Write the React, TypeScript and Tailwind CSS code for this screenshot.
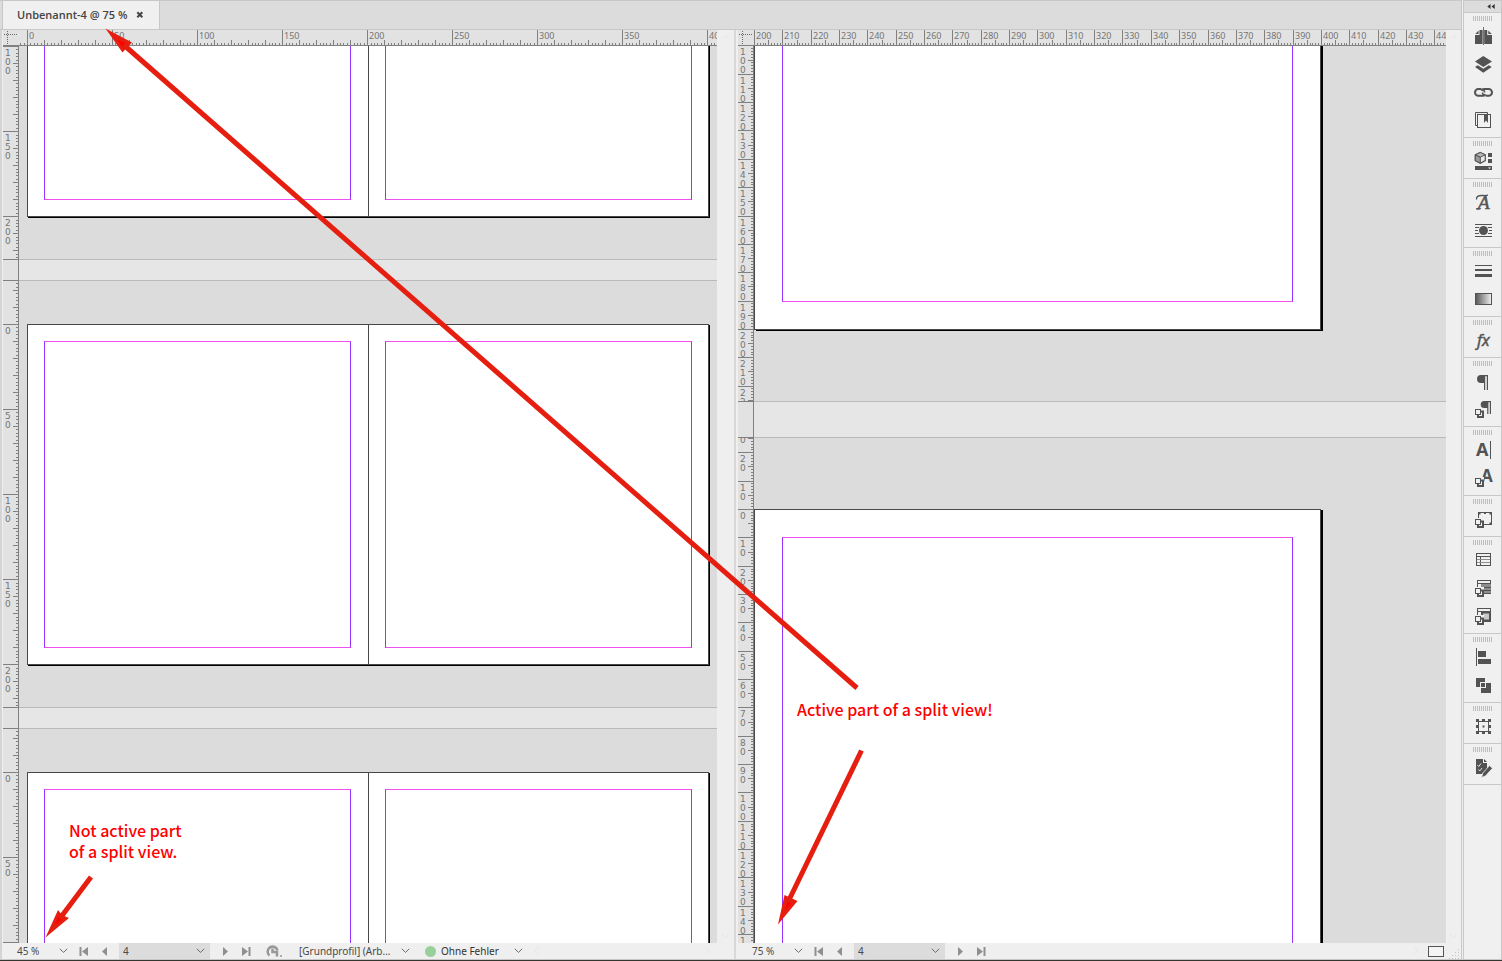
import type { ReactNode } from "react";

const RULER_LINE = "#808080";
const INK = "#535353";

interface Scale {
  px: number; // pixels per millimetre
  minor: number;
  mid: number;
  major: number;
}

interface Section {
  height?: number; // last one fills what is left
  top: number; // y of the spread inside the section
}

interface PaneData {
  scale: Scale;
  start: number; // millimetre value at the spread's left edge
  spreadX: number;
  units: [number, number];
  gap: string;
  sections: Section[];
}

const leftPane: PaneData = {
  scale: { px: 1.7008, minor: 2, mid: 10, major: 50 },
  start: 0,
  spreadX: 8,
  units: [-4, 400],
  gap: "h-[22px]",
  sections: [{ height: 213, top: -170 }, { height: 426, top: 43 }, { top: 43 }],
};

const rightPane: PaneData = {
  scale: { px: 2.8346, minor: 1, mid: 5, major: 10 },
  start: 200,
  spreadX: 0,
  units: [200, 443],
  gap: "h-[37px]",
  sections: [{ height: 355, top: -284 }, { top: 71 }],
};

function ticks(from: number, to: number, step: number) {
  const out: number[] = [];
  for (let v = Math.ceil(from / step) * step; v <= to; v += step) out.push(v);
  return out;
}

function HorizontalRuler({ data }: { data: PaneData }) {
  const { scale, start, spreadX, units } = data;
  return (
    <svg className="h-4 w-0 flex-1 border-b border-[#808080] bg-[#e2e2e2]" shapeRendering="crispEdges">
      {ticks(units[0], units[1] + 20, scale.minor).map((v) => {
        const x = Math.round(spreadX + (v - start) * scale.px);
        const len = v % scale.major === 0 ? 16 : v % scale.mid === 0 ? 5 : 2;
        return <rect key={v} x={x} y={15 - len} width={1} height={len} fill={RULER_LINE} />;
      })}
      {ticks(units[0], units[1], scale.major).map((v) => (
        <text key={v} x={Math.round(spreadX + (v - start) * scale.px) + 2} y={9} fontSize={9} fill="#757575">
          {v}
        </text>
      ))}
    </svg>
  );
}

function VerticalRuler({ section, scale }: { section: Section; scale: Scale }) {
  const height = section.height ?? 640;
  const from = -section.top / scale.px;
  const to = (height - section.top) / scale.px;
  const y = (v: number) => Math.round(section.top + v * scale.px);
  const digits = ticks(from - scale.major, to, scale.major)
    .flatMap((v) => [...String(Math.abs(v))].map((digit, i) => ({ key: `${v}-${i}`, digit, base: y(v) + 10 + i * 9 })))
    .filter(({ base }) => base > 3 && base < height + 6);
  return (
    <svg
      className={section.height ? "block w-4 shrink-0 border-r border-[#808080]" : "block h-0 w-4 flex-1 border-r border-[#808080]"}
      style={section.height ? { height: section.height } : undefined}
      shapeRendering="crispEdges"
      fontFamily="DejaVu Sans, sans-serif"
    >
      {ticks(from, to, scale.minor).map((v) => {
        const len = v % scale.major === 0 ? 15 : v % scale.mid === 0 ? 5 : 2;
        return <rect key={v} x={15 - len} y={y(v)} width={len} height={1} fill={RULER_LINE} />;
      })}
      {digits.map(({ key, digit, base }) => (
        <text key={key} x={2} y={base} fontSize={9} fill="#757575">
          {digit}
        </text>
      ))}
    </svg>
  );
}

function Margins() {
  return <div className="h-full border border-x-[#9933ff] border-y-[#f050f0]" />;
}

function Spread({ top, single }: { top: number; single?: boolean }) {
  if (single) {
    return (
      <div className="absolute left-0 h-[568px] w-[567px] border border-[#484848] bg-white p-[27px] shadow-[2px_1px_0_#000]" style={{ top }}>
        <Margins />
      </div>
    );
  }
  return (
    <div className="absolute left-2 flex h-[341px] w-[682px] border border-[#484848] bg-white shadow-[1px_1px_0_#000]" style={{ top }}>
      <div className="w-[341px] border-r border-[#484848] py-4 pr-[17px] pl-4">
        <Margins />
      </div>
      <div className="flex-1 p-4">
        <Margins />
      </div>
    </div>
  );
}

function Chevron({ className = "", color = "#6b6b6b" }: { className?: string; color?: string }) {
  return (
    <svg width="9" height="6" viewBox="0 0 9 6" className={className} fill="none" stroke={color}>
      <path d="M.8 .8L4.5 4.4L8.2 .8" />
    </svg>
  );
}

function ScrollBar({ width }: { width: string }) {
  return (
    <div className={`flex shrink-0 flex-col items-center justify-between bg-[#efefef] py-1 ${width}`}>
      <Chevron className="rotate-180" color="#e6e6e6" />
      <Chevron color="#e6e6e6" />
    </div>
  );
}

function Pane({ data, single, scrollWidth, children }: { data: PaneData; single?: boolean; scrollWidth: string; children: ReactNode }) {
  return (
    <section className="flex min-w-0 flex-col">
      <div className="flex min-h-0 flex-1">
        <div className="flex min-w-0 flex-1 flex-col">
          <div className="flex">
            <svg width="16" height="16" className="shrink-0 border-b border-[#808080] bg-[#e2e2e2]" shapeRendering="crispEdges">
              <path d="M4.5 1V15M1 4.5H15" stroke="#6b6b6b" strokeDasharray="1 1" />
            </svg>
            <HorizontalRuler data={data} />
          </div>
          <div className="flex min-h-0 flex-1">
            <div className="flex w-4 shrink-0 flex-col overflow-hidden bg-[#e2e2e2]">
              {data.sections.map((s, i) => (
                <div key={i} className={s.height ? "contents" : "flex min-h-0 flex-1 flex-col"}>
                  {i > 0 && <div className={`shrink-0 border-y border-r border-[#808080] ${data.gap}`} />}
                  <VerticalRuler section={s} scale={data.scale} />
                </div>
              ))}
            </div>
            <div className="flex min-w-0 flex-1 flex-col overflow-hidden bg-[#dcdcdc]">
              {data.sections.map((s, i) => (
                <div key={i} className={s.height ? "contents" : "flex min-h-0 flex-1 flex-col"}>
                  {i > 0 && <div className={`shrink-0 border-y border-[#bababa] bg-[#e6e6e6] ${data.gap}`} />}
                  <div
                    className={s.height ? "relative shrink-0 overflow-hidden" : "relative flex-1 overflow-hidden"}
                    style={s.height ? { height: s.height } : undefined}
                  >
                    <Spread top={s.top} single={single} />
                  </div>
                </div>
              ))}
            </div>
          </div>
        </div>
        <ScrollBar width={scrollWidth} />
      </div>
      <div className="flex h-4 shrink-0 items-center bg-[#efefef] pl-[14px] text-[10px] text-[#4a4a4a]">{children}</div>
    </section>
  );
}

function Dropdown({ label, value, className }: { label: string; value: string; className: string }) {
  return (
    <div className={`relative flex h-4 shrink-0 items-center ${className}`}>
      <select aria-label={label} className="h-4 w-full appearance-none bg-transparent pr-3 leading-4 outline-none">
        <option>{value}</option>
      </select>
      <Chevron className="pointer-events-none absolute right-[5px]" />
    </div>
  );
}

function StepButton({ label, d }: { label: string; d: string }) {
  return (
    <button aria-label={label} className="flex h-4 w-[21px] shrink-0 items-center justify-center">
      <svg width="10" height="10" viewBox="0 0 10 10" fill="#8f8f8f">
        <path d={d} />
      </svg>
    </button>
  );
}

function PageNavigation({ zoom }: { zoom: string }) {
  return (
    <>
      <Dropdown label="Zoom" value={zoom} className="w-14" />
      <StepButton label="Erste Seite" d="M.5 1h2v9h-2zM9 1v9L3 5.500z" />
      <StepButton label="Vorherige Seite" d="M7 1v9L2 5.500z" />
      <Dropdown label="Seite" value="4" className="ml-1 w-[91px] bg-[#dcdcdc] pl-1" />
      <span className="w-1" />
      <StepButton label="Nächste Seite" d="M3 1v9l5-4.500z" />
      <StepButton label="Letzte Seite" d="M7.500 1h2v9h-2zM1 1v9l6-4.500z" />
    </>
  );
}

// Small overlapping boxes that mark the "styles" panels
const styleBadge = (
  <g>
    <path d="M1 10h10v10H4v-3H1z" fill="#f0f0f0" />
    <path d="M7 13.5h3v5.5H5V16" fill="none" stroke={INK} strokeWidth="2" />
    <rect x="2.5" y="11.5" width="5" height="5" fill="#f0f0f0" stroke={INK} />
  </g>
);

const panelGroups: { name: string; art: ReactNode }[][] = [
  [
    {
      name: "Seiten",
      art: (
        <g>
          <path d="M6.5 5H9.6V19H2V10H6.5zM2.3 9L5.6 5.4V9zM11.200 5h3v5H19v9h-7.800zM15.3 5.4L18.7 9h-3.4z" />
          <path d="M10 2h.8v18H10z" />
        </g>
      ),
    },
    { name: "Ebenen", art: <path d="M10.3 3L19 8.500l-8.700 5.500L2 8.500zM2 14l2.800-1.800 5.500 3.600 5.500-3.600 2.900 1.800-8.400 5.700z" /> },
    {
      name: "Verknüpfungen",
      art: (
        <g fill="none" strokeWidth="2">
          <path d="M12.500 13.200A3.500 3.500 0 0 1 10 14.800H5.400a3.400 3.400 0 0 1 0-6.800H8.500" stroke={INK} />
          <path d="M8.500 9.700A3.500 3.500 0 0 1 11.500 8h4.100a3.400 3.400 0 0 1 0 6.800H12.800" stroke={INK} />
          <path d="M8.800 8.200c2 .4 2.800 1.500 2.800 3.300M12.200 14.600c-2-.4-2.700-1.500-2.700-3.200" stroke={INK} strokeWidth="1.500" />
        </g>
      ),
    },
    {
      name: "Lesezeichen",
      art: (
        <g>
          <path d="M4 16.500H2.500v-13h12V5" fill="none" stroke={INK} />
          <rect x="4.500" y="5.500" width="13" height="13" fill="none" stroke={INK} />
          <path d="M11 6h4v8l-2-2.500L11 14z" />
        </g>
      ),
    },
  ],
  [
    {
      name: "CC Libraries",
      art: (
        <g>
          <path d="M7.300 2.500l5 2.300v5.800l-5 2.600-5-2.600V4.800z" fill="#e8e8e8" stroke={INK} strokeWidth="1.200" />
          <path d="M2.300 4.800l5 2.300v6.100l-5-2.600z" fill="#9a9a9a" stroke={INK} />
          <path d="M2.300 4.800l5-2.300 5 2.300-5 2.300z" fill="#b8b8b8" stroke={INK} />
          <path d="M15 3h4v4h-4zM15 9h4v4h-4zM2 16h17v4H2z" />
          <path d="M15 17.500h3L16.500 19z" fill="#fff" />
        </g>
      ),
    },
  ],
  [
    {
      name: "Glyphen",
      art: (
        <g>
          <text x="5" y="18" fontSize="19" fontStyle="italic" fontFamily="Liberation Serif, serif" stroke={INK} strokeWidth=".5">A</text>
          <path d="M3.500 8.500C3 5.500 5.500 4.500 8.500 4.500s4.500.2 6.500-.3" fill="none" stroke={INK} strokeWidth="1.300" />
          <path d="M7.500 17.500c-2 1-3.500.8-4.200-.2" fill="none" stroke={INK} strokeWidth="1.300" />
        </g>
      ),
    },
    {
      name: "Textumfluss",
      art: (
        <g>
          <path d="M2 5h17v1H2zM2 8h4v1H2zM2 11h3v1H2zM2 14h4v1H2zM2 17h17v1H2zM15 8h4v1h-4zM16 11h3v1h-3zM15 14h4v1h-4z" />
          <circle cx="10.500" cy="11.500" r="4.500" />
        </g>
      ),
    },
  ],
  [
    { name: "Kontur", art: <path d="M2 5h17v1H2zM2 9h17v2H2zM2 14h17v3H2z" /> },
    {
      name: "Verlauf",
      art: (
        <g>
          <defs>
            <linearGradient id="swatch">
              <stop offset="0" stopColor="#555" />
              <stop offset="1" stopColor="#f0f0f0" />
            </linearGradient>
          </defs>
          <rect x="2.500" y="5.500" width="16" height="11" fill="url(#swatch)" stroke={INK} />
        </g>
      ),
    },
  ],
  [
    {
      name: "Effekte",
      art: (
        <text x="4" y="17" fontSize="16" fontStyle="italic" fontFamily="Open Sans, sans-serif" stroke={INK} strokeWidth=".5">
          fx
        </text>
      ),
    },
  ],
  [
    { name: "Absatz", art: <path d="M15 5v15h-1.200V6.200h-1.600V20H11v-7H8a4 4 0 0 1 0-8z" /> },
    {
      name: "Absatzformate",
      art: (
        <g>
          <path d="M18 3v13h-1.200V4.200h-1.400V16h-1.200v-6h-3a3.500 3.500 0 0 1 0-7z" />
          {styleBadge}
        </g>
      ),
    },
  ],
  [
    {
      name: "Zeichen",
      art: (
        <g>
          <text x="3" y="17" fontSize="18" fontWeight="700" fontFamily="Open Sans, sans-serif">A</text>
          <path d="M17 2h1v18h-1z" />
        </g>
      ),
    },
    {
      name: "Zeichenformate",
      art: (
        <g>
          <text x="8" y="15" fontSize="17" fontWeight="700" fontFamily="Open Sans, sans-serif">A</text>
          {styleBadge}
        </g>
      ),
    },
  ],
  [
    {
      name: "Objektformate",
      art: (
        <g>
          <rect x="5.500" y="4.500" width="13" height="12" fill="none" stroke={INK} />
          <path d="M5 4h2.500v2.500H5zM16.500 4H19v2.500h-2.500zM16.500 14.500H19V17h-2.500zM11 4h2v2h-2z" />
          {styleBadge}
        </g>
      ),
    },
  ],
  [
    {
      name: "Tabelle",
      art: (
        <g>
          <rect x="3.500" y="4.500" width="14" height="12" fill="none" stroke={INK} />
          <path d="M3 7h15v1H3zM7 8h1v9H7z" />
          <path d="M4 10h13v1H4zM4 13h13v1H4z" fill="#8e8e8e" />
        </g>
      ),
    },
    {
      name: "Tabellenformate",
      art: (
        <g>
          <rect x="4.500" y="3.500" width="13" height="3" fill="none" stroke={INK} />
          <path d="M8 7h10v3H8zM9 11h9v2H9zM11 14h7v2h-7z" fill="#8e8e8e" />
          <path d="M4 6h1v5H4zM8 10h10v1H8zM10 13h8v1h-8zM11 16h7v1h-7z" />
          {styleBadge}
        </g>
      ),
    },
    {
      name: "Zellenformate",
      art: (
        <g>
          <rect x="4.500" y="3.500" width="13" height="3" fill="none" stroke={INK} />
          <path d="M4 6h1v5H4zM8 6h10v11h-7v-6H8z" />
          <path d="M10 8.500h6v6h-5V11h-1z" fill="#c8c8c8" />
          {styleBadge}
        </g>
      ),
    },
  ],
  [
    { name: "Ausrichten", art: <path d="M3 2h1v18H3zM5 5h8v6H5zM5 13h13v5H5z" /> },
    {
      name: "Pathfinder",
      art: (
        <g>
          <path d="M3 4h9v4H7v5H3zM18 9v10H8v-5h5V9z" />
          <path d="M8 9h4v4H8z" />
        </g>
      ),
    },
  ],
  [
    {
      name: "Transformieren",
      art: (
        <g>
          <path d="M3 4h3v3H3zM9 4h3v3H9zM15 4h3v3h-3zM3 10h3v3H3zM15 10h3v3h-3zM3 16h3v3H3zM9 16h3v3H9zM15 16h3v3h-3z" />
          <rect x="5.500" y="6.500" width="10" height="10" fill="#f0f0f0" stroke={INK} />
          <path d="M9.500 10.500h2v2h-2z" />
        </g>
      ),
    },
  ],
  [
    {
      name: "Änderungen verfolgen",
      art: (
        <g>
          <path d="M3 3h7v4h4v7l-5 4H3z" />
          <path d="M11 3l3 3h-3z" />
          <path d="M4.500 9l1.200 1.500L8 7.500M5.500 13.500l1.200 1.500L9 12" fill="none" stroke="#e0e0e0" />
          <path d="M16.500 9.500l3 2.700-7 7.800-4 1.500 1.300-4.500z" stroke="#f0f0f0" strokeWidth=".8" />
        </g>
      ),
    },
  ],
];

function Dock() {
  return (
    <aside className="flex w-[39px] shrink-0 flex-col border-x border-[#c8c8c8] bg-[#f0f0f0]">
      <button aria-label="Bedienfelder erweitern" className="flex h-[13px] items-center justify-end border-y border-[#c8c8c8] bg-[#dcdcdc] pr-[6px]">
        <svg width="8" height="5" viewBox="0 0 8 5" fill="#333">
          <path d="M3.500 0v5L.3 2.500zM7.700 0v5L4.500 2.500z" />
        </svg>
      </button>
      {panelGroups.map((group, i) => (
        <div key={i} className="flex flex-col items-center border-b border-[#c8c8c8] pt-[3px] pb-1">
          <div className="h-[5px] w-[19px] bg-[repeating-linear-gradient(90deg,#bdbdbd_0_1px,transparent_1px_2px)]" />
          {group.map(({ name, art }) => (
            <button key={name} aria-label={name} className="flex size-7 items-center justify-center">
              <svg width="20" height="20" viewBox="0 0 20 20" fill={INK} className="shrink-0 overflow-visible">
                {art}
              </svg>
            </button>
          ))}
        </div>
      ))}
    </aside>
  );
}

function Annotations() {
  return (
    <>
      <svg className="pointer-events-none absolute inset-0 size-full" fill="#e61e10">
        <g stroke="#e61e10" strokeWidth="5">
          <path d="M857 688L125 46" />
          <path d="M861.500 750.500L789 900" />
          <path d="M91 877L61 917" />
        </g>
        <path d="M105.500 28.500L132 42.500L127 47.500L122.500 52.500z" />
        <path d="M778 924.500L784.500 895L791 898L797.500 901z" />
        <path d="M45.500 937.500L58 910L62 915L69 918z" />
        <g fill="#ff0000">
          <path d="M117 39.500l8 3.500-3 3.500z" />
          <path d="M784.500 911l3-9.500 4 2z" />
          <path d="M55 925l3-8 4 2.500z" />
        </g>
      </svg>
      <p className="absolute top-[699px] left-[797px] font-['Noto_Sans_CJK_SC',sans-serif] text-base leading-[21px] font-medium text-[#ff0000]">
        Active part of a split view!
      </p>
      <p className="absolute top-[820px] left-[69px] font-['Noto_Sans_CJK_SC',sans-serif] text-base leading-[21px] font-medium text-[#ff0000]">
        Not active part
        <br />
        of a split view.
      </p>
    </>
  );
}

export default function App() {
  return (
    <div className="relative flex h-screen flex-col overflow-hidden border-b border-[#35352f] bg-[#efefef] font-['Noto_Sans','Open_Sans',sans-serif]">
      <div className="flex min-h-0 flex-1 border-b border-[#c8c8c8]">
        <main className="mr-px flex min-w-0 flex-1 flex-col border-r border-[#c8c8c8]">
          <header className="flex h-[30px] shrink-0 border-y border-[#c8c8c8] bg-[#dcdcdc] pl-0.5">
            <div className="flex items-center gap-[9px] border-x border-[#c8c8c8] bg-[#f0f0f0] pr-[15px] pl-[14px] text-[#444]">
              <h1 className="font-['Open_Sans',sans-serif] text-[11px] font-semibold whitespace-nowrap">Unbenannt-4 @ 75 %</h1>
              <button aria-label="Schließen">
                <svg width="8" height="8" viewBox="0 0 8 8" stroke="#444" strokeWidth="2">
                  <path d="M1.300 1.300l5 5M6.300 1.300l-5 5" />
                </svg>
              </button>
            </div>
          </header>
          <div className="grid min-h-0 flex-1 grid-cols-[733fr_725fr] border-l-2 border-[#d4d4d4] pl-px">
            <div className="grid min-h-0 min-w-0 border-r-2 border-[#d8d8d8]">
              <Pane data={leftPane} scrollWidth="w-[17px]">
                <PageNavigation zoom="45 %" />
                <button aria-label="Cloud-Status" className="ml-2 flex w-5 shrink-0 justify-center">
                  <svg width="18" height="14" viewBox="0 0 18 14" fill="none" stroke="#979797" strokeWidth="2.500">
                    <path d="M4.500 11.500A5 5 0 1 1 12.500 6.500" />
                    <path d="M7.500 4.500V8H12v4.500" />
                    <path d="M15 12h2" strokeWidth="1.500" />
                  </svg>
                </button>
                <Dropdown label="Preflight-Profil" value="[Grundprofil] (Arb…" className="ml-[15px] w-[116px]" />
                <span className="ml-[10px] size-[11px] shrink-0 rounded-full bg-[#98cf9c]" />
                <Dropdown label="Preflight-Status" value="Ohne Fehler" className="ml-[5px] w-[87px] text-[#333]" />
                <Chevron className="ml-1 rotate-90" color="#e6e6e6" />
                <Chevron className="mr-[22px] ml-auto -rotate-90" color="#e6e6e6" />
              </Pane>
            </div>
            <div className="grid min-h-0 min-w-0 pl-0.5">
              <Pane data={rightPane} single scrollWidth="w-[15px]">
                <PageNavigation zoom="75 %" />
                <Chevron className="mr-[7px] ml-auto -rotate-90" color="#e6e6e6" />
                <button aria-label="Layoutansicht teilen" className="mr-[5px] h-[11px] w-4 border border-[#555] bg-[#f4f4f4]" />
                <svg width="11" height="10" className="mr-px self-end" fill="#c4c4c4">
                  <path d="M9 0h1v1H9zM6 3h1v1H6zM9 3h1v1H9zM3 6h1v1H3zM6 6h1v1H6zM9 6h1v1H9zM0 9h1v1H0zM3 9h1v1H3zM6 9h1v1H6zM9 9h1v1H9z" />
                </svg>
              </Pane>
            </div>
          </div>
        </main>
        <Dock />
      </div>
      <Annotations />
    </div>
  );
}
